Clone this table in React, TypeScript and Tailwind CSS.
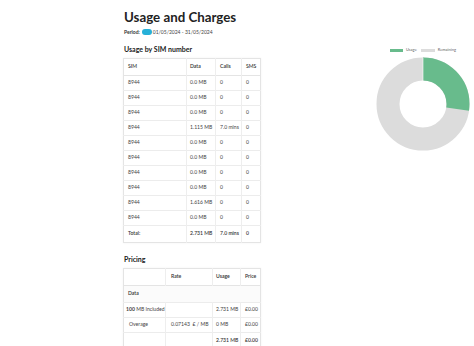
import React from 'react';

const simRows = [
  { sim: '8944', data: '0.0 MB', calls: '0', sms: '0' },
  { sim: '8944', data: '0.0 MB', calls: '0', sms: '0' },
  { sim: '8944', data: '0.0 MB', calls: '0', sms: '0' },
  { sim: '8944', data: '1.115 MB', calls: '7.0 mins', sms: '0' },
  { sim: '8944', data: '0.0 MB', calls: '0', sms: '0' },
  { sim: '8944', data: '0.0 MB', calls: '0', sms: '0' },
  { sim: '8944', data: '0.0 MB', calls: '0', sms: '0' },
  { sim: '8944', data: '0.0 MB', calls: '0', sms: '0' },
  { sim: '8944', data: '1.616 MB', calls: '0', sms: '0' },
  { sim: '8944', data: '0.0 MB', calls: '0', sms: '0' },
];

const UsageDonut: React.FC<{ used: number; total: number }> = ({ used, total }) => {
  const r = 35;
  const c = 2 * Math.PI * r;
  const frac = used / total;
  return (
    <svg width="94" height="94" viewBox="0 0 94 94">
      <circle cx="47" cy="47" r={r} fill="none" stroke="#dcdcdc" strokeWidth="23" />
      <circle
        cx="47"
        cy="47"
        r={r}
        fill="none"
        stroke="#68bb8c"
        strokeWidth="23"
        strokeDasharray={`${c * frac} ${c}`}
        transform="rotate(-90 47 47)"
      />
      <line x1="47" y1="1" x2="47" y2="24" stroke="#fff" strokeWidth="0.6" />
    </svg>
  );
};

const App: React.FC = () => {
  return (
    <div className="flex h-[346px] w-[474px] overflow-hidden bg-white text-[#444] font-['Lato','Liberation_Sans',sans-serif]">
      {/* Left column */}
      <div className="ml-[123px] w-[137px] pt-[9px]">
        <h1 className="text-[13.3px] leading-[17px] font-bold text-[#222] pl-[1px]">Usage and Charges</h1>
        <div className="mt-[2px] flex items-center text-[5px] leading-[8px] pl-[1px]">
          <span className="font-bold text-[#333]">Period:</span>
          <span className="ml-[2px] h-[6px] w-[10px] rounded-full bg-[#27b0d8]" />
          <span className="ml-[1px] text-[#444]">01/05/2024 - 31/05/2024</span>
        </div>
        <h2 className="mt-[9px] text-[7px] leading-[9px] font-bold text-[#222] pl-[1px]">Usage by SIM number</h2>

        <table className="mt-[4px] w-[137px] table-fixed border-collapse border border-[#e4e4e4] text-[5.1px] shadow-[0_0_2px_rgba(0,0,0,0.06)]">
          <colgroup>
            <col className="w-[63px]" />
            <col className="w-[29px]" />
            <col className="w-[26px]" />
            <col className="w-[19px]" />
          </colgroup>
          <thead>
            <tr className="h-[17px] border-b border-[#e4e4e4] text-left text-[#333]">
              <th className="pl-[4px] font-semibold">SIM</th>
              <th className="pl-[3px] font-semibold border-l border-[#eee]">Data</th>
              <th className="pl-[4px] font-semibold border-l border-[#eee]">Calls</th>
              <th className="pl-[4px] font-semibold border-l border-[#eee]">SMS</th>
            </tr>
          </thead>
          <tbody>
            {simRows.map((r, i) => (
              <tr key={i} className="h-[15px] border-b border-[#ececec]">
                <td className="pl-[4px]">{r.sim}</td>
                <td className="pl-[3px] border-l border-[#eee]">{r.data}</td>
                <td className="pl-[4px] border-l border-[#eee]">{r.calls}</td>
                <td className="pl-[4px] border-l border-[#eee]">{r.sms}</td>
              </tr>
            ))}
            <tr className="h-[17px] font-semibold text-[#333]">
              <td className="pl-[4px]">Total:</td>
              <td className="pl-[3px] border-l border-[#eee]">2.731 MB</td>
              <td className="pl-[4px] border-l border-[#eee]">7.0 mins</td>
              <td className="pl-[4px] border-l border-[#eee]">0</td>
            </tr>
          </tbody>
        </table>

        <h2 className="mt-[12px] text-[7px] leading-[9px] font-bold text-[#222] pl-[1px]">Pricing</h2>

        <table className="mt-[4px] w-[137px] table-fixed border-collapse border border-[#e4e4e4] text-[5.1px] shadow-[0_0_2px_rgba(0,0,0,0.06)]">
          <colgroup>
            <col className="w-[42px]" />
            <col className="w-[47px]" />
            <col className="w-[28px]" />
            <col className="w-[20px]" />
          </colgroup>
          <thead>
            <tr className="h-[17px] border-b border-[#e4e4e4] text-left text-[#333]">
              <th className="font-semibold" />
              <th className="pl-[5px] font-semibold border-l border-[#eee]">Rate</th>
              <th className="pl-[3px] font-semibold border-l border-[#eee]">Usage</th>
              <th className="pl-[4px] font-semibold border-l border-[#eee]">Price</th>
            </tr>
          </thead>
          <tbody>
            <tr className="h-[17px] border-b border-[#ececec] bg-[#fbfbfb]">
              <td colSpan={4} className="pl-[4px] font-semibold text-[#333]">Data</td>
            </tr>
            <tr className="h-[15px] border-b border-[#ececec]">
              <td className="pl-[2px] whitespace-nowrap"><span className="font-bold">100</span> MB Included</td>
              <td className="border-l border-[#eee]" />
              <td className="pl-[3px] border-l border-[#eee]">2.731 MB</td>
              <td className="pl-[4px] border-l border-[#eee]">£0.00</td>
            </tr>
            <tr className="h-[15px] border-b border-[#ececec]">
              <td className="pl-[5px]">Overage</td>
              <td className="pl-[5px] border-l border-[#eee] whitespace-nowrap">0.07143 &nbsp;£ / MB</td>
              <td className="pl-[3px] border-l border-[#eee]">0 MB</td>
              <td className="pl-[4px] border-l border-[#eee]">£0.00</td>
            </tr>
            <tr className="h-[16px] font-semibold text-[#333]">
              <td />
              <td className="border-l border-[#eee]" />
              <td className="pl-[3px] border-l border-[#eee]">2.731 MB</td>
              <td className="pl-[4px] border-l border-[#eee]">£0.00</td>
            </tr>
          </tbody>
        </table>
      </div>

      {/* Chart */}
      <div className="ml-[116px] pt-[47px] flex flex-col items-center w-[94px]">
        <div className="flex items-center gap-[3px] text-[4px] leading-[6px] text-[#666]">
          <span className="h-[3px] w-[13px] bg-[#68bb8c]" />
          <span>Usage</span>
          <span className="ml-[1px] h-[3px] w-[14px] bg-[#dcdcdc]" />
          <span>Remaining</span>
        </div>
        <div className="mt-[4px]">
          <UsageDonut used={2.731} total={10} />
        </div>
      </div>
    </div>
  );
};

export default App;
